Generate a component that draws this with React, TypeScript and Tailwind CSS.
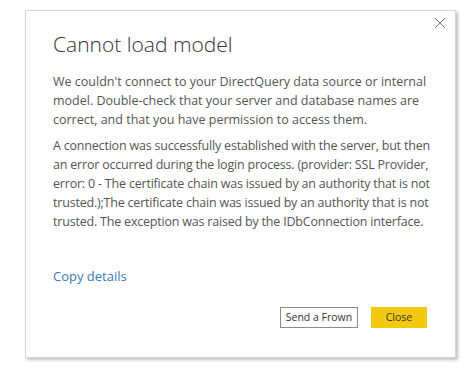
import type { FC } from "react";

const App: FC = () => {
    return (
        <div className="w-[474px] h-[373px] bg-white pt-[10px] pl-[25px] font-['Open_Sans',sans-serif]">
            <div className="relative w-[431px] h-[348px] bg-white border border-[#d6d6d6] shadow-[2px_2px_3px_rgba(0,0,0,0.25)] pl-[27px] pr-[27px] flex flex-col">
                <button className="absolute right-[9px] top-[6px] text-[#777]">
                    <svg width="12" height="12" viewBox="0 0 12 12" fill="none" stroke="currentColor" strokeWidth="1">
                        <path d="M1 1L11 11M11 1L1 11" />
                    </svg>
                </button>
                <h1 className="mt-[18px] text-[21px] leading-[30px] font-light text-[#333]">Cannot load model</h1>
                <p className="mt-[13px] text-[12.5px] leading-[19px] text-[#555] whitespace-nowrap">
                    We couldn't connect to your DirectQuery data source or internal<br />
                    model. Double-check that your server and database names are<br />
                    correct, and that you have permission to access them.
                </p>
                <p className="mt-[7px] text-[12.5px] leading-[19px] text-[#555] whitespace-nowrap tracking-[-0.2px]">
                    A connection was successfully established with the server, but then<br />
                    an error occurred during the login process. (provider: SSL Provider,<br />
                    error: 0 - The certificate chain was issued by an authority that is not<br />
                    trusted.);The certificate chain was issued by an authority that is not<br />
                    trusted. The exception was raised by the IDbConnection interface.
                </p>
                <a className="mt-[36px] text-[13px] leading-[19px] text-[#3a78b5] self-start">Copy details</a>
                <div className="mt-[21px] flex justify-end gap-[13px] pr-[1px]">
                    <button className="w-[78px] h-[21px] border border-[#8a8a8a] text-[10.5px] text-[#333] bg-white">Send a Frown</button>
                    <button className="w-[56px] h-[21px] bg-[#f2c811] text-[10.5px] text-[#333]">Close</button>
                </div>
            </div>
        </div>
    );
};

export default App;
